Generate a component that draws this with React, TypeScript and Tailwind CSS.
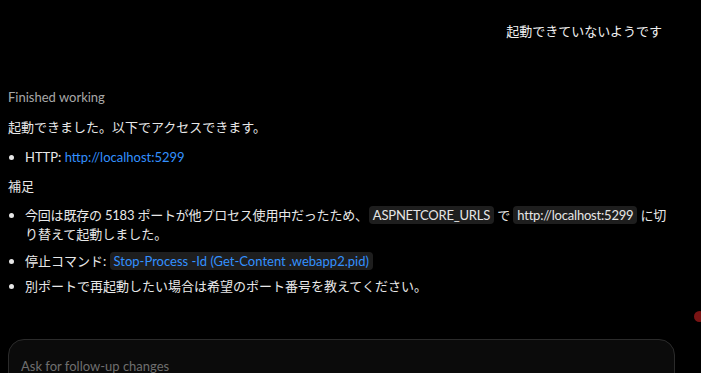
import React from "react";

const font = "font-['Lato','Noto_Sans_CJK_JP',sans-serif]";

function Bullet({ children, className = "" }: { children: React.ReactNode; className?: string }) {
  return (
    <div className={"flex " + className}>
      <div className="w-[17px] shrink-0 flex justify-start pt-[7px] pl-[1px]">
        <div className="w-[5px] h-[5px] rounded-full bg-[#e6e6e6]" />
      </div>
      <div className="flex-1">{children}</div>
    </div>
  );
}

function Code({ children, link = false, className = "" }: { children: React.ReactNode; link?: boolean; className?: string }) {
  return (
    <span
      className={
        "inline-block rounded-[4px] bg-[#1e1e1e] px-[4px] leading-[18px] " +
        (link ? "text-[#3391ff] " : "text-[#e6e6e6] ") +
        className
      }
    >
      {children}
    </span>
  );
}

export default function App() {
  return (
    <div
      className={
        "relative w-[701px] h-[373px] overflow-hidden bg-black text-[#e8e8e8] text-[13px] leading-[19px] " +
        font
      }
    >
      <div className="flex justify-end pr-[39px] pt-[22px]">
        <div className="text-[#f0f0f0]">起動できていないようです</div>
      </div>

      <div className="px-[8px]">
        <div className="mt-[47px] text-[#a8a8a8]">Finished working</div>
        <div className="mt-[11px]">起動できました。以下でアクセスできます。</div>
        <Bullet className="mt-[11px]">
          HTTP: <span className="text-[#3391ff]">http://localhost:5299</span>
        </Bullet>
        <div className="mt-[10px]">補足</div>
        <Bullet className="mt-[10px]">
          <div className="whitespace-nowrap tracking-[-0.2px]">
            今回は既存の 5183 ポートが他プロセス使用中だったため、<Code className="ml-[1px]">ASPNETCORE_URLS</Code> で{" "}
            <Code>http://localhost:5299</Code> に切
          </div>
          <div>り替えて起動しました。</div>
        </Bullet>
        <Bullet className="mt-[8px]">
          停止コマンド: <Code link>Stop-Process -Id (Get-Content .webapp2.pid)</Code>
        </Bullet>
        <Bullet className="mt-[6px]">別ポートで再起動したい場合は希望のポート番号を教えてください。</Bullet>

        <div className="mt-[43px] mr-[18px] h-[60px] rounded-[16px] border border-[#2b2b2b] bg-[#0b0b0b] px-[12px] pt-[17px]">
          <div className="text-[#6f6f6f]">Ask for follow-up changes</div>
        </div>
      </div>

      <div className="absolute left-[694px] top-[311px] w-[11px] h-[11px] rounded-full bg-[#7a1414]" />
    </div>
  );
}
